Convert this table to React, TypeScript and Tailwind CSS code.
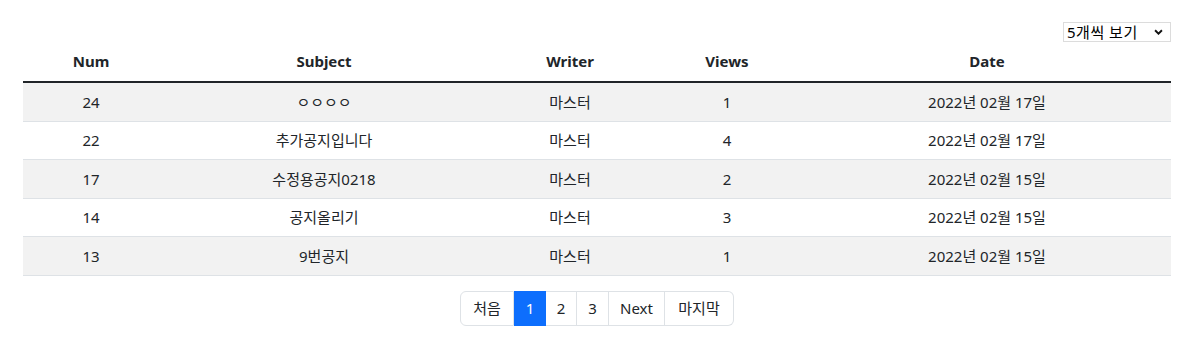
const rows = [
  { num: 24, subject: "ㅇㅇㅇㅇ", writer: "마스터", views: 1, date: "2022년 02월 17일" },
  { num: 22, subject: "추가공지입니다", writer: "마스터", views: 4, date: "2022년 02월 17일" },
  { num: 17, subject: "수정용공지0218", writer: "마스터", views: 2, date: "2022년 02월 15일" },
  { num: 14, subject: "공지올리기", writer: "마스터", views: 3, date: "2022년 02월 15일" },
  { num: 13, subject: "9번공지", writer: "마스터", views: 1, date: "2022년 02월 15일" },
];

const cols = "grid grid-cols-[136px_330px_162px_152px_368px]";

export default function App() {
  return (
    <main
      className="min-h-screen bg-white text-[#212529] text-[15px]"
      style={{ fontFamily: '"Noto Sans", "Noto Sans CJK KR", sans-serif' }}
    >
      <section className="mx-[23px] pt-[22px]">
        <div className="flex justify-end">
          <div className="flex items-center justify-between w-[108px] h-[20px] border border-[#dcdcdc] pl-[3px] pr-[7px] text-[15px] leading-none text-black">
            <span className="tracking-[0.5px]">5개씩 보기</span>
            <svg width="9" height="6" viewBox="0 0 10 7">
              <path d="M1 1.5 L5 5.5 L9 1.5" fill="none" stroke="#111" strokeWidth="2.2" />
            </svg>
          </div>
        </div>

        <div className={`${cols} h-[41px] border-b-2 border-[#212529] font-bold text-center`}>
          <div className="flex items-center justify-center">Num</div>
          <div className="flex items-center justify-center">Subject</div>
          <div className="flex items-center justify-center">Writer</div>
          <div className="flex items-center justify-center">Views</div>
          <div className="flex items-center justify-center">Date</div>
        </div>

        {rows.map((r, i) => (
          <div
            key={r.num}
            className={`${cols} h-[38.5px] border-b border-[#dee2e6] text-center ${i % 2 === 0 ? "bg-[#f2f2f2]" : "bg-white"}`}
          >
            <div className="flex items-center justify-center">{r.num}</div>
            <div className="flex items-center justify-center">{r.subject}</div>
            <div className="flex items-center justify-center">{r.writer}</div>
            <div className="flex items-center justify-center">{r.views}</div>
            <div className="flex items-center justify-center">{r.date}</div>
          </div>
        ))}

        <div className="flex justify-center mt-[15px]">
          <div className="flex h-[35px] text-[15px]">
            <div className="flex items-center justify-center w-[54px] border border-[#dee2e6] rounded-l-[6px]">처음</div>
            <div className="flex items-center justify-center w-[32px] bg-[#0d6efd] text-white border border-[#0d6efd]">1</div>
            <div className="flex items-center justify-center w-[31px] border border-l-0 border-[#dee2e6]">2</div>
            <div className="flex items-center justify-center w-[32px] border border-l-0 border-[#dee2e6]">3</div>
            <div className="flex items-center justify-center w-[56px] border border-l-0 border-[#dee2e6]">Next</div>
            <div className="flex items-center justify-center w-[69px] border border-l-0 border-[#dee2e6] rounded-r-[6px]">마지막</div>
          </div>
        </div>
      </section>
    </main>
  );
}
